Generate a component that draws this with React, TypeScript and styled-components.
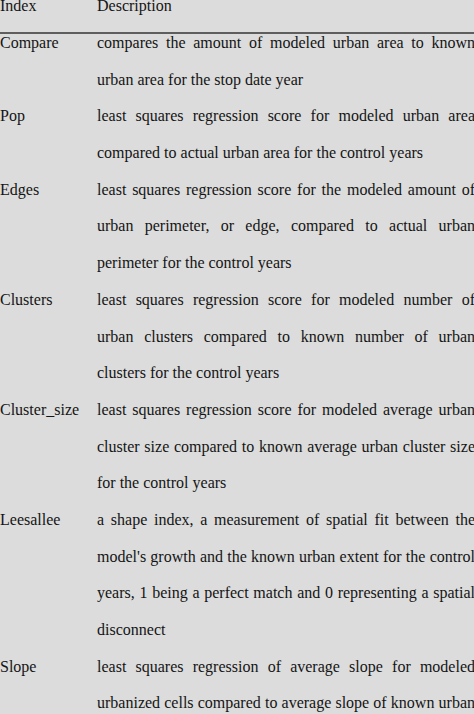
import React from 'react';
import styled, { createGlobalStyle } from 'styled-components';

const GlobalStyle = createGlobalStyle`
  html, body {
    margin: 0;
    padding: 0;
    background: #dcdcdc;
    overflow: hidden;
  }
`;

type Entry = { index: string; lines: string[]; lastFull?: boolean };

const entries: Entry[] = [
  {
    index: 'Compare',
    lines: ['compares the amount of modeled urban area to known', 'urban area for the stop date year'],
  },
  {
    index: 'Pop',
    lines: ['least squares regression score for modeled urban area', 'compared to actual urban area for the control years'],
  },
  {
    index: 'Edges',
    lines: [
      'least squares regression score for the modeled amount of',
      'urban perimeter, or edge, compared to actual urban',
      'perimeter for the control years',
    ],
  },
  {
    index: 'Clusters',
    lines: [
      'least squares regression score for modeled number of',
      'urban clusters compared to known number of urban',
      'clusters for the control years',
    ],
  },
  {
    index: 'Cluster_size',
    lines: [
      'least squares regression score for modeled average urban',
      'cluster size compared to known average urban cluster size',
      'for the control years',
    ],
  },
  {
    index: 'Leesallee',
    lines: [
      'a shape index, a measurement of spatial fit between the',
      "model's growth and the known urban extent for the control",
      'years, 1 being a perfect match and 0 representing a spatial',
      'disconnect',
    ],
  },
  {
    index: 'Slope',
    lines: [
      'least squares regression of average slope for modeled',
      'urbanized cells compared to average slope of known urban',
    ],
    lastFull: true,
  },
];

const App = () => {
  return (
    <>
      <GlobalStyle />
      <Table>
        <Header>
          <IndexCell>Index</IndexCell>
          <HeadCell>Description</HeadCell>
        </Header>
        <Body>
          {entries.map((e) => (
            <Row key={e.index}>
              <IndexCell>{e.index}</IndexCell>
              <Description>
                {e.lines.map((line, i) => (
                  <Line key={i} $full={i < e.lines.length - 1 || !!e.lastFull}>
                    {line}
                  </Line>
                ))}
              </Description>
            </Row>
          ))}
        </Body>
      </Table>
    </>
  );
};

export default App;

const Table = styled.div`
  width: 475px;
  font-family: 'Liberation Serif', 'Times New Roman', serif;
  font-size: 16px;
  color: #141414;
`;

const Header = styled.div`
  display: grid;
  grid-template-columns: 97px 1fr;
  line-height: 12px;
  padding-bottom: 20px;
  border-bottom: 2px solid #5e5e5e;
`;

const HeadCell = styled.div`
  white-space: nowrap;
`;

const Body = styled.div`
  display: flex;
  flex-direction: column;
  gap: 18.7px;
`;

const Row = styled.div`
  display: grid;
  grid-template-columns: 97px 1fr;
  line-height: 18px;
`;

const IndexCell = styled.div`
  white-space: nowrap;
`;

const Description = styled.div`
  display: flex;
  flex-direction: column;
  gap: 18.7px;
`;

const Line = styled.div<{ $full: boolean }>`
  white-space: nowrap;
  text-align: justify;
  text-align-last: ${(p) => (p.$full ? 'justify' : 'left')};
`;
